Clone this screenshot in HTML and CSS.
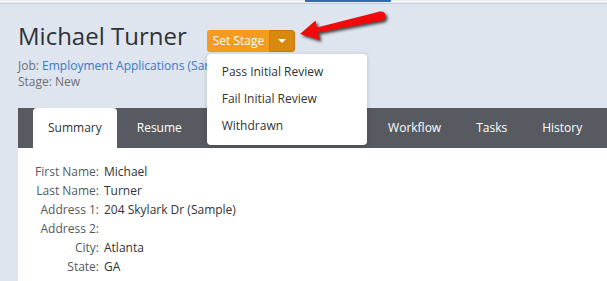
FILE: index.html
```
<!DOCTYPE html>
<html>
<head>
<meta charset="utf-8">
<link rel="stylesheet" href="styles.css">
</head>
<body>
<div class="topstrip"><div class="topstrip-active"></div></div>
<div class="header">
  <div class="title-row">
    <h1 class="title">Michael Turner</h1>
    <div class="stage-group">
      <div class="stage-btn">
        <span class="stage-main">Set Stage</span>
        <span class="stage-split"><span class="caret"></span></span>
      </div>
      <ul class="stage-menu">
        <li>Pass Initial Review</li>
        <li>Fail Initial Review</li>
        <li>Withdrawn</li>
      </ul>
    </div>
  </div>
  <div class="meta">Job: <a class="link">Employment Applications (Sample)</a></div>
  <div class="meta">Stage: New</div>
</div>
<div class="tabs">
  <div class="tab active">Summary</div>
  <div class="tab">Resume</div>
  <div class="tab">Notes</div>
  <div class="tab tab-wide">Documents</div>
  <div class="tab">Workflow</div>
  <div class="tab">Tasks</div>
  <div class="tab">History</div>
</div>
<div class="panel">
  <div class="fields">
    <div class="lbl">First Name:</div><div class="val">Michael</div>
    <div class="lbl">Last Name:</div><div class="val">Turner</div>
    <div class="lbl">Address 1:</div><div class="val">204 Skylark Dr (Sample)</div>
    <div class="lbl">Address 2:</div><div class="val"></div>
    <div class="lbl">City:</div><div class="val">Atlanta</div>
    <div class="lbl">State:</div><div class="val">GA</div>
  </div>
</div>
<svg class="arrow" width="607" height="60" viewBox="0 0 607 60">
  <circle cx="381" cy="16" r="4.6" fill="#f00a0a"/>
  <polygon points="382,20.5 380,11.5 317,27.5 315.5,20.4 300,34 319.7,40 318,32.5" fill="#f00a0a"/>
</svg>
</body>
</html>
```
FILE: styles.css
```
html, body {
  margin: 0;
  padding: 0;
}
body {
  background: #dee5ee;
  font-family: "Open Sans", "Liberation Sans", sans-serif;
  color: #333;
  position: relative;
  width: 607px;
  height: 281px;
  overflow: hidden;
}
.topstrip {
  height: 3px;
  background: #eef1f5;
  border-bottom: 1px solid #c6cbd1;
  padding-left: 305px;
}
.topstrip-active {
  width: 86px;
  height: 2px;
  background: #2c6db6;
}
.header {
  padding: 0 18px;
}
.title-row {
  display: flex;
  align-items: flex-start;
  margin-top: 16px;
  height: 32px;
}
.title {
  margin: 0;
  font-size: 24px;
  line-height: 32px;
  font-weight: 400;
  color: #2f3236;
}
.stage-group {
  position: relative;
  margin-left: 20px;
  margin-top: 10px;
}
.stage-btn {
  display: flex;
  height: 22px;
  border-radius: 3px;
  overflow: hidden;
}
.stage-main {
  background: #f39c1d;
  color: #fff;
  font-size: 12px;
  line-height: 22px;
  padding: 0 5px 0 6px;
}
.stage-split {
  width: 26px;
  background: #d8870f;
  border: 1px solid #c47a0e;
  border-left-color: #c98011;
  border-radius: 0 3px 3px 0;
  box-sizing: border-box;
  display: flex;
  align-items: center;
  justify-content: center;
}
.caret {
  width: 0;
  height: 0;
  border-left: 4px solid transparent;
  border-right: 4px solid transparent;
  border-top: 4px solid #fff;
}
.stage-menu {
  position: absolute;
  left: 0;
  top: calc(100% + 2px);
  width: 160px;
  height: 91px;
  box-sizing: border-box;
  margin: 0;
  padding: 4px 0 0 15px;
  list-style: none;
  background: #fff;
  border-radius: 4px;
  box-shadow: 0 1px 5px rgba(0, 0, 0, 0.18);
  z-index: 5;
}
.stage-menu li {
  font-size: 12px;
  line-height: 27px;
  color: #333;
  white-space: nowrap;
}
.meta {
  font-size: 12px;
  line-height: 16px;
  color: #6b6f74;
}
.title-row + .meta {
  margin-top: 6px;
}
.link {
  color: #3a78c2;
}
.tabs {
  margin: 18px 0 0 18px;
  height: 40px;
  background: #575b61;
  display: flex;
  padding-left: 15px;
}
.tab {
  font-size: 12px;
  line-height: 40px;
  color: #fff;
  padding: 0 17.5px;
  white-space: nowrap;
}
.tab.active {
  background: #fff;
  color: #2f3236;
  border-radius: 4px 4px 0 0;
  padding: 0 15px;
}
.tab.active + .tab {
  padding-left: 20px;
}
.tab.tab-wide {
  padding-right: 21.5px;
}
.panel {
  margin-left: 18px;
  background: #fff;
  height: 140px;
  padding-top: 14px;
  box-sizing: border-box;
}
.fields {
  display: grid;
  grid-template-columns: 81px auto;
  column-gap: 5px;
  font-size: 12px;
  line-height: 19px;
  justify-content: start;
}
.lbl {
  text-align: right;
  color: #55595e;
}
.val {
  color: #333;
}
.arrow {
  position: absolute;
  left: 0;
  top: 0;
  pointer-events: none;
  filter: drop-shadow(2px 2px 1.5px rgba(0, 0, 0, 0.7));
  z-index: 10;
}
```
